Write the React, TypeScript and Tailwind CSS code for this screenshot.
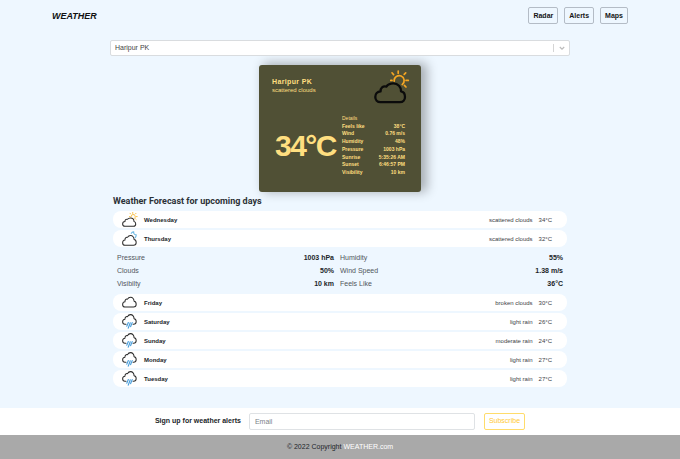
import { useState } from "react";

type IconKind = "sun" | "moon" | "cloud" | "rain";

const cities = ["Haripur PK", "Islamabad PK", "Lahore PK"];

const current = [
  { label: "Feels like", value: "38°C" },
  { label: "Wind", value: "0.76 m/s" },
  { label: "Humidity", value: "48%" },
  { label: "Pressure", value: "1003 hPa" },
  { label: "Sunrise", value: "5:35:26 AM" },
  { label: "Sunset", value: "6:46:57 PM" },
  { label: "Visibility", value: "10 km" },
];

const forecast: { day: string; icon: IconKind; text: string; temp: string }[] = [
  { day: "Wednesday", icon: "sun", text: "scattered clouds", temp: "34°C" },
  { day: "Thursday", icon: "moon", text: "scattered clouds", temp: "32°C" },
  { day: "Friday", icon: "cloud", text: "broken clouds", temp: "30°C" },
  { day: "Saturday", icon: "rain", text: "light rain", temp: "26°C" },
  { day: "Sunday", icon: "rain", text: "moderate rain", temp: "24°C" },
  { day: "Monday", icon: "rain", text: "light rain", temp: "27°C" },
  { day: "Tuesday", icon: "rain", text: "light rain", temp: "27°C" },
];

const dayDetails = [
  { label: "Pressure", value: "1003 hPa" },
  { label: "Humidity", value: "55%" },
  { label: "Clouds", value: "50%" },
  { label: "Wind Speed", value: "1.38 m/s" },
  { label: "Visibilty", value: "10 km" },
  { label: "Feels Like", value: "36°C" },
];

const cloudPath =
  "M6.5 32.2C3.2 32.2 1.3 29.8 1.3 27C1.3 24 3.4 21.6 6.6 21.4C6.3 18 9 15.6 12.4 16.6C13.8 14.5 16.5 13.4 19.3 13.4C24 13.4 27.2 17 27 21.4C29.6 21.8 31 24.2 31 27C31 30 29 32.2 26 32.2Z";

const tallCloudPath =
  "M6.5 32.4C3.2 32.4 1.3 29.6 1.3 26.4C1.3 23 3.4 20.4 6.6 20.2C6.3 16.2 9 13.4 12.4 14.4C13.8 11.6 16.5 10.2 19.3 10.2C24 10.2 27.4 14.4 27.2 19.4C30.2 19.8 32 22.8 32 26C32 29.8 29.6 32.4 26 32.4Z";

function WeatherIcon({ kind, className, bold = false }: { kind: IconKind; className: string; bold?: boolean }) {
  return (
    <svg viewBox="0 0 36 34" className={className} fill="none" strokeLinecap="round" strokeLinejoin="round" aria-hidden="true">
      {kind === "sun" && (
        <g stroke={bold ? "#f5a623" : "#f8bd3c"} strokeWidth={bold ? 1.7 : 2.1}>
          <path d="M20.2 11.2A5 5 0 1 1 28.2 14.6" />
          <path d="M24.2 1V3.2M18 2.8L19.6 4.6M16.8 10.4H18M31.7 2.9L30.2 4.4M32 10.4H34.3M30.4 15.4L32 17" />
        </g>
      )}
      {kind === "moon" && (
        <path d="M20.8 5.4C22 3 24 1.8 26.6 2C25.6 5.6 28.2 9 32.2 8.8C32 11.8 31 14 29.4 15.4" stroke="#6bb7e2" strokeWidth="2.4" />
      )}
      {kind === "rain" ? (
        <>
          <path
            d="M9 23.4H6.5C3.2 23.4 1.3 20.8 1.3 17.6C1.3 14.4 3.4 12 6.6 11.7C6.3 7.8 9 5 12.4 6C13.8 3 16.5 1.4 19.3 1.4C24 1.4 27.4 5.8 27.2 10.6C30.2 11 32 13.8 32 17C32 20.6 29.6 23.4 26 23.4H25"
            stroke="#2b2b2b"
            strokeWidth="2.3"
          />
          <path d="M14.2 19.5L10.8 27.5M18.6 20L14 32M23 19.5L19.4 28.5" stroke="#4a9fdc" strokeWidth="2.7" />
        </>
      ) : (
        <path
          d={kind === "sun" ? cloudPath : tallCloudPath}
          stroke={bold ? "#0b0b0b" : "#2b2b2b"}
          strokeWidth="2.3"
          transform={kind === "cloud" ? "translate(0 -5)" : undefined}
        />
      )}
    </svg>
  );
}

function Navbar() {
  return (
    <nav className="flex items-center justify-between px-[52px] pt-[7px]">
      <a href="#home" className="text-[9px] leading-4 font-bold italic text-[#111]">WEATHER</a>
      <div className="flex gap-[6px]">
        {["Radar", "Alerts", "Maps"].map((name) => (
          <button key={name} className="h-[17px] px-1 rounded-xs border border-[#b4bcc6] text-[7px] leading-[15px] font-bold text-[#151515] cursor-pointer">
            {name}
          </button>
        ))}
      </div>
    </nav>
  );
}

function CurrentWeather({ city }: { city: string }) {
  return (
    <section className="w-[162px] mx-auto mt-[9px] pt-[5px] pb-4 pl-[13px] pr-[11px] rounded-[3px] bg-[#505035] text-[#ffdf80] shadow-[5px_-1px_11px_1px_rgba(0,0,0,0.3)]">
      <div className="flex justify-between">
        <div className="pt-[7px]">
          <p className="text-[7px] leading-[9px] font-bold tracking-wider">{city}</p>
          <p className="text-[6px] leading-[9px]">scattered clouds</p>
        </div>
        <WeatherIcon kind="sun" bold className="w-9 h-[34px]" />
      </div>

      <div className="flex justify-between items-center mt-[11px] pr-[5px]">
        <p className="pl-[3px] text-[30px] leading-8 font-bold tracking-tighter">34°C</p>
        <div className="w-[63px] h-[61px] flex flex-col justify-between text-[5px] leading-[7px]">
          <p>Details</p>
          {current.map((item) => (
            <div key={item.label} className="flex justify-between font-bold">
              <span>{item.label}</span>
              <span>{item.value}</span>
            </div>
          ))}
        </div>
      </div>
    </section>
  );
}

function Forecast() {
  const [open, setOpen] = useState("Thursday");

  return (
    <section className="px-[3px]">
      <h2 className="my-[3px] text-[9px] leading-[13px] font-bold text-[#2c3137] font-[Roboto,sans-serif]">Weather Forecast for upcoming days</h2>

      <div className="flex flex-col gap-[2px]">
        {forecast.map((item) => (
          <div key={item.day}>
            <button
              onClick={() => setOpen(open === item.day ? "" : item.day)}
              aria-expanded={open === item.day}
              className="w-full h-[17px] pl-[9px] pr-[15px] flex items-center rounded-lg bg-white text-[6px] leading-2 text-[#3c4146] cursor-pointer"
            >
              <WeatherIcon kind={item.icon} className="w-4 h-[15px]" />
              <span className="ml-[6px] flex-1 text-left font-bold text-[#212529]">{item.day}</span>
              <span className="mr-[6px]">{item.text}</span>
              <span>{item.temp}</span>
            </button>

            {open === item.day && (
              <dl className="grid grid-cols-[217px_1fr] gap-x-[6px] pl-1 pr-1 pt-1 pb-[2px] text-[7px] leading-[13px] text-[#50565c]">
                {dayDetails.map((detail) => (
                  <div key={detail.label} className="flex justify-between">
                    <dt>{detail.label}</dt>
                    <dd className="font-bold text-[#212529]">{detail.value}</dd>
                  </div>
                ))}
              </dl>
            )}
          </div>
        ))}
      </div>
    </section>
  );
}

function Footer() {
  return (
    <footer className="text-[7px]">
      <form onSubmit={(e) => e.preventDefault()} className="h-[27px] flex items-center justify-center bg-white">
        <label htmlFor="email" className="font-bold text-[#212529]">Sign up for weather alerts</label>
        <input
          id="email"
          type="email"
          placeholder="Email"
          className="w-[226px] h-[17px] ml-2 mr-[9px] px-[5px] rounded-xs border border-[#dfe2e5] placeholder:text-[#7b8289]"
        />
        <button className="h-[17px] px-1 rounded-xs border border-[#ffdc6b] text-[#ffc933] cursor-pointer">Subscribe</button>
      </form>

      <div className="h-6 flex items-center justify-center gap-[2px] bg-[#a9a9a9] text-[#212529]">
        <span>© 2022 Copyright</span>
        <a href="#home" className="text-white">WEATHER.com</a>
      </div>
    </footer>
  );
}

export default function App() {
  const [city, setCity] = useState(cities[0]);

  return (
    <div className="min-h-screen flex flex-col bg-[#eef7ff] font-['Liberation_Sans',Arial,sans-serif]">
      <Navbar />

      <main className="flex-1 w-full max-w-[460px] mx-auto pt-4">
        {/* CITY */}
        <div className="relative">
          <select
            aria-label="City"
            value={city}
            onChange={(e) => setCity(e.target.value)}
            className="block w-full h-4 px-1 appearance-none rounded-xs border border-[#d9dcdf] bg-white text-[7px] leading-[14px] text-[#444]"
          >
            {cities.map((name) => (
              <option key={name}>{name}</option>
            ))}
          </select>
          <div className="absolute right-[5px] inset-y-1 pl-[5px] flex items-center border-l border-[#d5d5d5] pointer-events-none">
            <svg viewBox="0 0 6 6" className="w-[6px] h-[6px]" fill="none" stroke="#bbb" strokeWidth="1.2" aria-hidden="true">
              <path d="M0.8 2L3 4.2L5.2 2" />
            </svg>
          </div>
        </div>

        <CurrentWeather city={city} />
        <Forecast />
      </main>

      <Footer />
    </div>
  );
}
